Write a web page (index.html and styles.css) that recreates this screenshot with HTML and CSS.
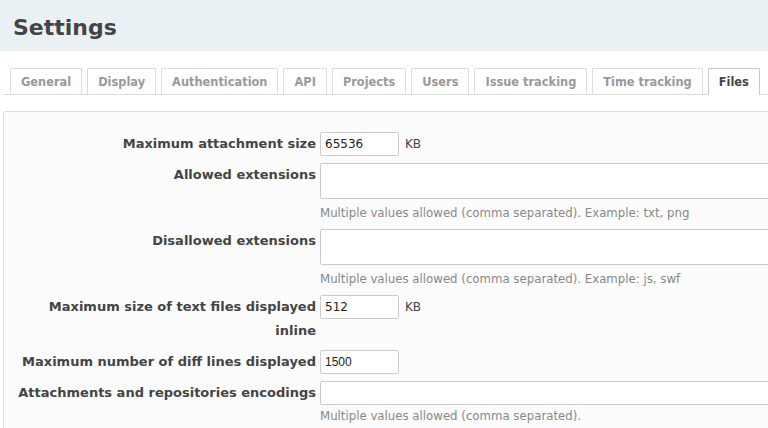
FILE: index.html
```html
<!DOCTYPE html>
<html>
<head>
<meta charset="utf-8">
<link rel="stylesheet" href="styles.css">
</head>
<body>
<div class="header"><h2>Settings</h2></div>
<div class="tabs">
  <a class="tab">General</a>
  <a class="tab">Display</a>
  <a class="tab">Authentication</a>
  <a class="tab">API</a>
  <a class="tab">Projects</a>
  <a class="tab">Users</a>
  <a class="tab">Issue tracking</a>
  <a class="tab">Time tracking</a>
  <a class="tab active">Files</a>
</div>
<div class="box">
  <div class="row">
    <label class="lbl">Maximum attachment size</label>
    <div class="field"><span class="input small">65536</span><span class="unit">KB</span></div>
  </div>
  <div class="row">
    <label class="lbl">Allowed extensions</label>
    <div class="field"><span class="textarea"></span><div class="hint">Multiple values allowed (comma separated). Example: txt, png</div></div>
  </div>
  <div class="row">
    <label class="lbl">Disallowed extensions</label>
    <div class="field"><span class="textarea"></span><div class="hint">Multiple values allowed (comma separated). Example: js, swf</div></div>
  </div>
  <div class="row">
    <label class="lbl">Maximum size of text files displayed inline</label>
    <div class="field"><span class="input small">512</span><span class="unit">KB</span></div>
  </div>
  <div class="row">
    <label class="lbl">Maximum number of diff lines displayed</label>
    <div class="field"><span class="input small arial">1500</span></div>
  </div>
  <div class="row">
    <label class="lbl">Attachments and repositories encodings</label>
    <div class="field"><span class="input wide"></span><div class="hint near">Multiple values allowed (comma separated).</div></div>
  </div>
</div>
</body>
</html>
```
FILE: styles.css
```css
html, body {
  margin: 0;
  padding: 0;
  background: #fff;
  overflow: hidden;
  font-family: "DejaVu Sans", Verdana, sans-serif;
  font-size: 12px;
  color: #333;
}
.header {
  background: #e9f1f5;
  height: 51px;
  padding: 4px 0 0 13px;
  box-sizing: border-box;
}
.header h2 {
  margin: 0;
  font-size: 22px;
  line-height: 47px;
  font-weight: bold;
  color: #444;
}
.tabs {
  margin: 17px 0 0 3px;
  padding-left: 7px;
  display: flex;
  gap: 5px;
  border-bottom: 1px solid #ddd;
  width: 900px;
  height: 26px;
}
.tab {
  display: block;
  border: 1px solid #ddd;
  border-bottom: none;
  background: #fff;
  color: #999;
  font-weight: bold;
  font-size: 11.4px;
  line-height: 27px;
  padding: 0 10px;
  height: 26px;
  box-sizing: border-box;
}
.tab.active {
  color: #444;
  height: 27px;
  background: #fff;
  border-color: #ccc;
}
.box {
  margin: 16px 0 0 3px;
  width: 900px;
  border: 1px solid #ddd;
  border-radius: 3px;
  background: #fcfcfc;
  padding: 20px 0 40px 0;
  display: flex;
  flex-direction: column;
  gap: 7px;
}
.row {
  display: flex;
  align-items: flex-start;
}
.lbl {
  width: 316px;
  flex: none;
  text-align: right;
  font-weight: bold;
  font-size: 13px;
  color: #444;
  line-height: 24px;
  padding: 0 4px 0 10px;
  box-sizing: border-box;
}
.field {
  padding-left: 0;
  flex: 1;
}
.input {
  display: inline-block;
  vertical-align: top;
  box-sizing: border-box;
  height: 24px;
  border: 1px solid #ccc;
  border-radius: 2px;
  background: #fff;
  font-size: 12px;
  line-height: 22px;
  padding: 0 4px;
  color: #222;
}
.input.small { width: 79px; }
.input.arial { font-family: "Liberation Sans", Arial, sans-serif; }
.input.wide { width: 600px; }
.unit {
  display: inline-block;
  line-height: 24px;
  margin-left: 6px;
  color: #444;
  vertical-align: top;
}
.textarea {
  display: block;
  box-sizing: border-box;
  width: 600px;
  height: 36px;
  border: 1px solid #ccc;
  border-radius: 2px;
  background: #fff;
}
.hint {
  color: #888;
  font-size: 11.75px;
  line-height: 16px;
  padding: 6px 0 1px 0;
}
.hint.near { padding-top: 3px; }
```
